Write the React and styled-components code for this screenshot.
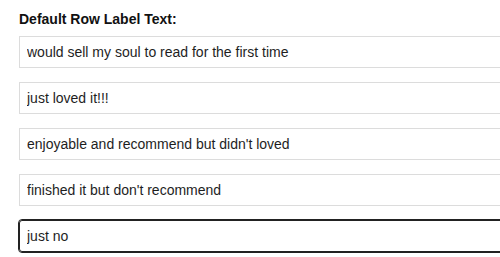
import React from 'react';
import styled, { createGlobalStyle } from 'styled-components';

const GlobalStyle = createGlobalStyle`
  html, body {
    margin: 0;
    padding: 0;
    background: #ffffff;
    overflow: hidden;
  }
  body {
    font-family: "Liberation Sans", Arial, sans-serif;
  }
`;

// the rows are wider than the window, their right ends are cut off
const Frame = styled.div`
  width: 100vw;
  height: 100vh;
  overflow: hidden;
`;

const Panel = styled.div`
  padding: 11px 0 0 19px;
  width: 620px;
`;

const Label = styled.div`
  font-size: 14px;
  line-height: 16px;
  font-weight: 700;
  color: #111;
  margin-bottom: 9px;
`;

const List = styled.div`
  display: flex;
  flex-direction: column;
  gap: 14px;
`;

const RowInput = styled.input`
  box-sizing: border-box;
  display: block;
  width: 100%;
  height: 32px;
  margin: 0;
  padding: 0 7px;
  font-family: "Liberation Sans", Arial, sans-serif;
  font-size: 14px;
  color: #1e1e1e;
  background: #fff;
  border: 1px solid ${p => (p.$active ? '#222' : '#dcdcdc')};
  border-radius: ${p => (p.$active ? '3px' : '0')};
  outline: ${p => (p.$active ? '1px solid #222' : 'none')};
  outline-offset: 0;
`;

const rows = [
  'would sell my soul to read for the first time',
  'just loved it!!!',
  "enjoyable and recommend but didn't loved",
  "finished it but don't recommend",
  'just no',
];

export default function App() {
  return (
    <>
      <GlobalStyle />
      <Frame>
        <Panel>
          <Label>Default Row Label Text:</Label>
          <List>
            {rows.map((text, i) => (
              <RowInput
                key={i}
                type="text"
                defaultValue={text}
                $active={i === rows.length - 1}
                readOnly
              />
            ))}
          </List>
        </Panel>
      </Frame>
    </>
  );
}
